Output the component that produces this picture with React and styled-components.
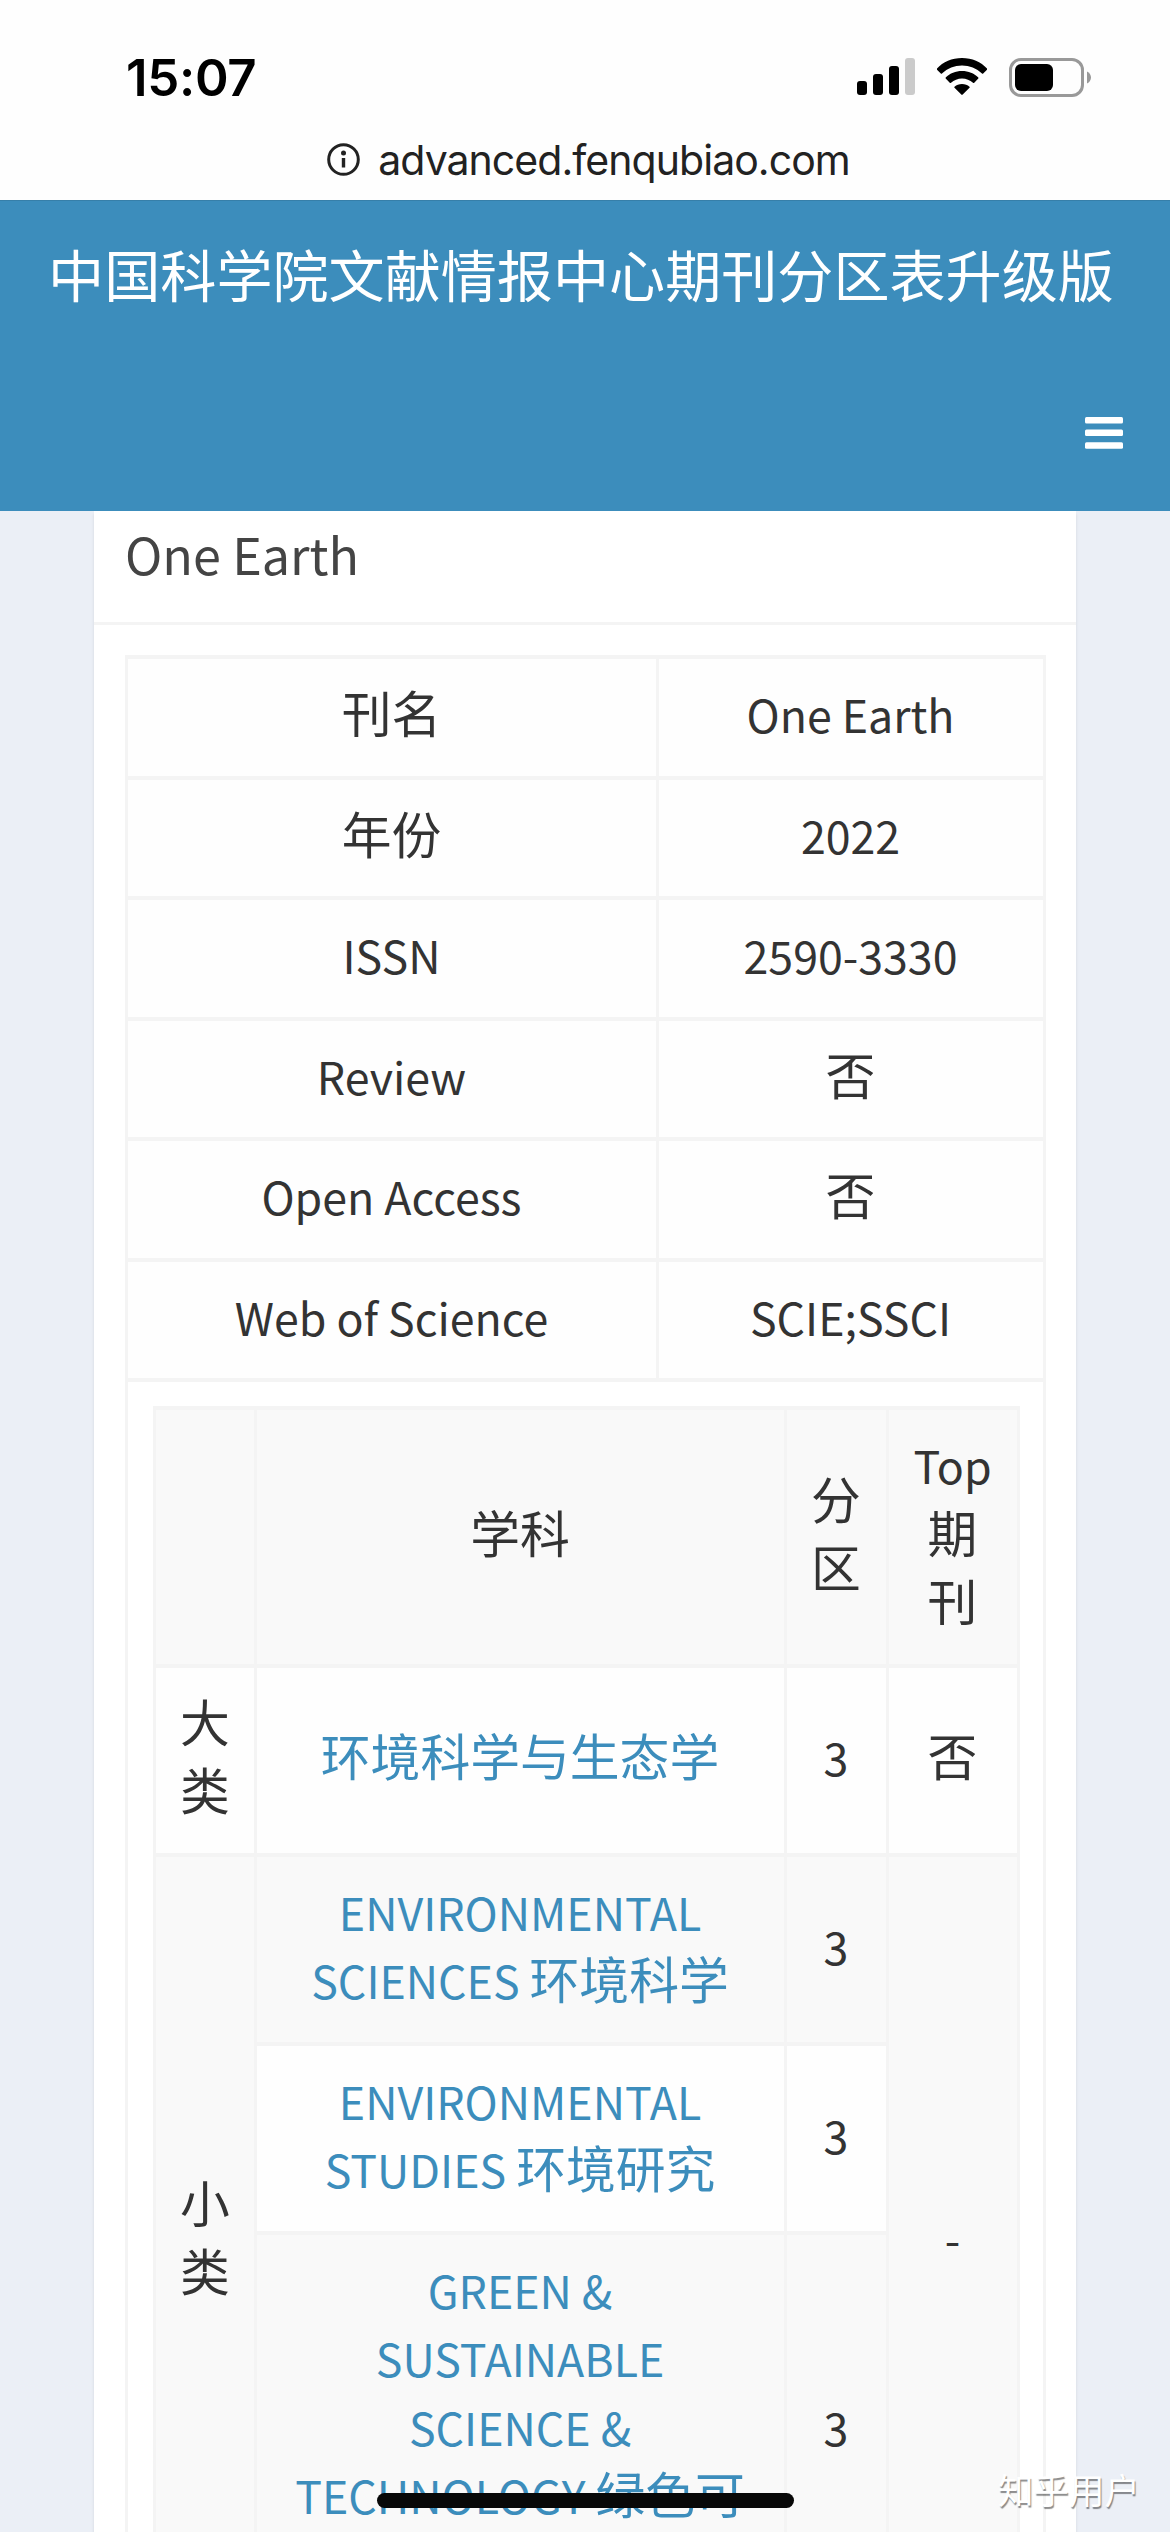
import React from 'react';
import styled, { createGlobalStyle } from 'styled-components';

const BLUE = '#3c8dbc';
const LINE = '#f4f4f4';

const GlobalStyle = createGlobalStyle`
  * {
    box-sizing: border-box;
  }
  body {
    margin: 0;
    background: #ebeff6;
    color: #333;
    font-family: "Noto Sans CJK SC", sans-serif;
    overflow: hidden;
  }
`;

const journal = [
  { label: '刊名', value: 'One Earth' },
  { label: '年份', value: '2022' },
  { label: 'ISSN', value: '2590-3330' },
  { label: 'Review', value: '否' },
  { label: 'Open Access', value: '否' },
  { label: 'Web of Science', value: 'SCIE;SSCI' },
];

// latin runs are set smaller than the chinese ones
const Mixed = ({ children }) =>
  children
    .split(/([\u4e00-\u9fff]+)/)
    .filter(Boolean)
    .map((part, i) =>
      /[\u4e00-\u9fff]/.test(part) ? <Han key={i}>{part}</Han> : <Latin key={i}>{part}</Latin>
    );

const App = () => {
  return (
    <Screen>
      <GlobalStyle />
      <StatusBar>
        <Clock>15:07</Clock>
        <StatusIcons>
          <svg width="58" height="37" viewBox="0 0 58 37">
            <rect x="0" y="23" width="10" height="14" rx="3" />
            <rect x="16" y="16" width="10" height="21" rx="3" />
            <rect x="32" y="8" width="10" height="29" rx="3" />
            <rect x="48" y="0" width="10" height="37" rx="3" fill="#cbcbcb" />
          </svg>
          <svg width="50" height="37" viewBox="0 0 50 37">
            <path d="M25 0C35 0 44 4 50 10.5Q50.400 11 50 11.700L46.200 15.600Q45.500 16 45 15.500C39.500 10.400 32.500 7.500 25 7.500S10.500 10.400 5 15.500Q4.500 16 3.800 15.600L0 11.700Q-.4 11 0 10.500C6 4 15 0 25 0Z" />
            <path d="M25 13C31.500 13 37 15.400 41.300 19.400Q41.700 20 41.300 20.600L37 24.900Q36.500 25.200 36 24.800C33 22.200 29.200 20.500 25 20.500S17 22.200 14 24.800Q13.500 25.200 13 24.900L8.700 20.600Q8.300 20 8.700 19.400C13 15.400 18.500 13 25 13Z" />
            <path d="M25 26C28 26 30.500 27 32.500 28.700Q33 29.200 32.500 29.700L25.700 36.600Q25 37.200 24.300 36.600L17.500 29.700Q17 29.200 17.500 28.700C19.500 27 22 26 25 26Z" />
          </svg>
          <svg width="82" height="39" viewBox="0 0 82 39">
            <rect x="1.500" y="1.500" width="72" height="36" rx="10.500" fill="none" stroke="#999" strokeWidth="3" />
            <rect x="6" y="6" width="38" height="27" rx="6" />
            <path d="M78 13.500C80.500 14.500 82 17 82 19.500S80.500 24.500 78 25.500Z" fill="#999" />
          </svg>
        </StatusIcons>
      </StatusBar>
      <AddressBar>
        <svg width="33" height="33" viewBox="0 0 33 33">
          <circle cx="16.500" cy="16.500" r="14.800" fill="none" stroke="#222" strokeWidth="3" />
          <circle cx="16.500" cy="10" r="2.500" fill="#222" />
          <rect x="14.800" y="15" width="3.400" height="9.500" fill="#222" />
        </svg>
        advanced.fenqubiao.com
      </AddressBar>
      <SiteHeader>
        <SiteTitle>中国科学院文献情报中心期刊分区表升级版</SiteTitle>
        <MenuButton>
          <svg width="38" height="32" viewBox="0 0 38 32" fill="#fff">
            <rect width="38" height="6.500" rx="1.500" />
            <rect y="12.600" width="38" height="6.500" rx="1.500" />
            <rect y="25.200" width="38" height="6.500" rx="1.500" />
          </svg>
        </MenuButton>
      </SiteHeader>
      <Card>
        <CardTitle>One Earth</CardTitle>
        <CardBody>
          <Table>
            <colgroup>
              <col width="531" />
              <col width="387" />
            </colgroup>
            <tbody>
              {journal.map(({ label, value }) => (
                <Row key={label} $height={120.5}>
                  <Cell><Mixed>{label}</Mixed></Cell>
                  <Cell><Mixed>{value}</Mixed></Cell>
                </Row>
              ))}
              <tr>
                <NestedCell colSpan={2}>
                  <Table>
                    <colgroup>
                      <col width="101" />
                      <col width="530" />
                      <col width="102" />
                      <col width="131" />
                    </colgroup>
                    <tbody>
                      <Row $height={258} $striped>
                        <Cell />
                        <Cell><Mixed>学科</Mixed></Cell>
                        <Cell><Mixed>分区</Mixed></Cell>
                        <Cell><Mixed>Top期刊</Mixed></Cell>
                      </Row>
                      <Row $height={188.5}>
                        <Cell><Mixed>大类</Mixed></Cell>
                        <Cell $link><Mixed>环境科学与生态学</Mixed></Cell>
                        <Cell><Mixed>3</Mixed></Cell>
                        <Cell><Mixed>否</Mixed></Cell>
                      </Row>
                      <Row $height={189} $striped>
                        <Cell rowSpan={3}><Mixed>小类</Mixed></Cell>
                        <Cell $link><Mixed>ENVIRONMENTAL SCIENCES 环境科学</Mixed></Cell>
                        <Cell><Mixed>3</Mixed></Cell>
                        <Cell rowSpan={3}><Mixed>-</Mixed></Cell>
                      </Row>
                      <Row $height={189}>
                        <Cell $link><Mixed>ENVIRONMENTAL STUDIES 环境研究</Mixed></Cell>
                        <Cell><Mixed>3</Mixed></Cell>
                      </Row>
                      <Row $height={395} $striped>
                        <Cell $link>
                          <Mixed>GREEN & SUSTAINABLE SCIENCE & TECHNOLOGY 绿色可</Mixed>
                          <br />
                          &nbsp;
                        </Cell>
                        <Cell><Mixed>3</Mixed></Cell>
                      </Row>
                    </tbody>
                  </Table>
                </NestedCell>
              </tr>
            </tbody>
          </Table>
        </CardBody>
      </Card>
      <HomeIndicator />
      <Watermark>知乎用户</Watermark>
    </Screen>
  );
};

const Screen = styled.div`
  position: relative;
  width: 1170px;
  height: 2532px;
  overflow: hidden;
`;

const StatusBar = styled.div`
  display: flex;
  justify-content: space-between;
  height: 130px;
  padding: 48px 79px 0 126px;
  background: #fefefe;
`;

const Clock = styled.div`
  font: 600 51px/60px Inter, sans-serif;
  color: #000;
  letter-spacing: -0.3px;
`;

const StatusIcons = styled.div`
  display: flex;
  align-items: flex-start;
  gap: 22px;
  padding-top: 10px;
`;

const AddressBar = styled.div`
  display: flex;
  align-items: center;
  justify-content: center;
  gap: 18px;
  height: 70px;
  padding: 0 0 11px 7px;
  background: #fefefe;
  color: #222;
  font: 400 41px/50px Inter, sans-serif;
  letter-spacing: -0.95px;
`;

const SiteHeader = styled.header`
  display: flex;
  flex-direction: column;
  height: 311px;
  background: ${BLUE};
  border-top: 1px solid #367fa9;
`;

const SiteTitle = styled.div`
  height: 150px;
  padding-right: 8px;
  line-height: 144px;
  text-align: center;
  color: #fff;
  font-size: 56.1px;
  font-weight: 400;
  white-space: nowrap;
`;

const MenuButton = styled.button`
  align-self: flex-end;
  display: flex;
  padding: 66px 47px 0 0;
  border: 0;
  background: transparent;
`;

const Card = styled.section`
  width: 982px;
  margin: 0 auto 0 94px;
  background: #fff;
  box-shadow: 0 3px 3px rgba(0, 0, 0, 0.1);
`;

const CardTitle = styled.h3`
  height: 114px;
  margin: 0;
  padding: 0 31px;
  border-bottom: 3px solid ${LINE};
  color: #444;
  font-size: 50.3px;
  font-weight: 400;
  line-height: 85px;
`;

const CardBody = styled.div`
  padding: 30px 31px 0;
`;

const Table = styled.table`
  width: 100%;
  border-collapse: collapse;
  table-layout: fixed;
`;

const Row = styled.tr`
  height: ${({ $height }) => $height}px;
  background: ${({ $striped }) => ($striped ? '#f9f9f9' : '#fefefe')};
`;

const Cell = styled.td`
  padding: 0 25px 10px 24px;
  border: solid ${LINE};
  border-width: 4px 3px;
  text-align: center;
  vertical-align: middle;
  font-size: 49px;
  line-height: 68.5px;
  color: ${({ $link }) => ($link ? BLUE : '#333')};
`;

const NestedCell = styled.td`
  padding: 24px 25px;
  border: 3px solid ${LINE};
`;

const Han = styled.span`
  font-size: 49.8px;
  font-weight: 400;
  line-height: 1;
`;

const Latin = styled.span`
  font-size: 44.7px;
  line-height: 1;
`;

const HomeIndicator = styled.div`
  position: absolute;
  left: 377px;
  bottom: 24px;
  width: 417px;
  height: 15px;
  border-radius: 8px;
  background: #080808;
`;

const Watermark = styled.div`
  position: absolute;
  right: 30px;
  bottom: 18px;
  color: #fff;
  font-size: 35.5px;
  line-height: 50px;
  text-shadow: 1px 2px 1px rgba(0, 0, 0, 0.45);
`;

export default App;
